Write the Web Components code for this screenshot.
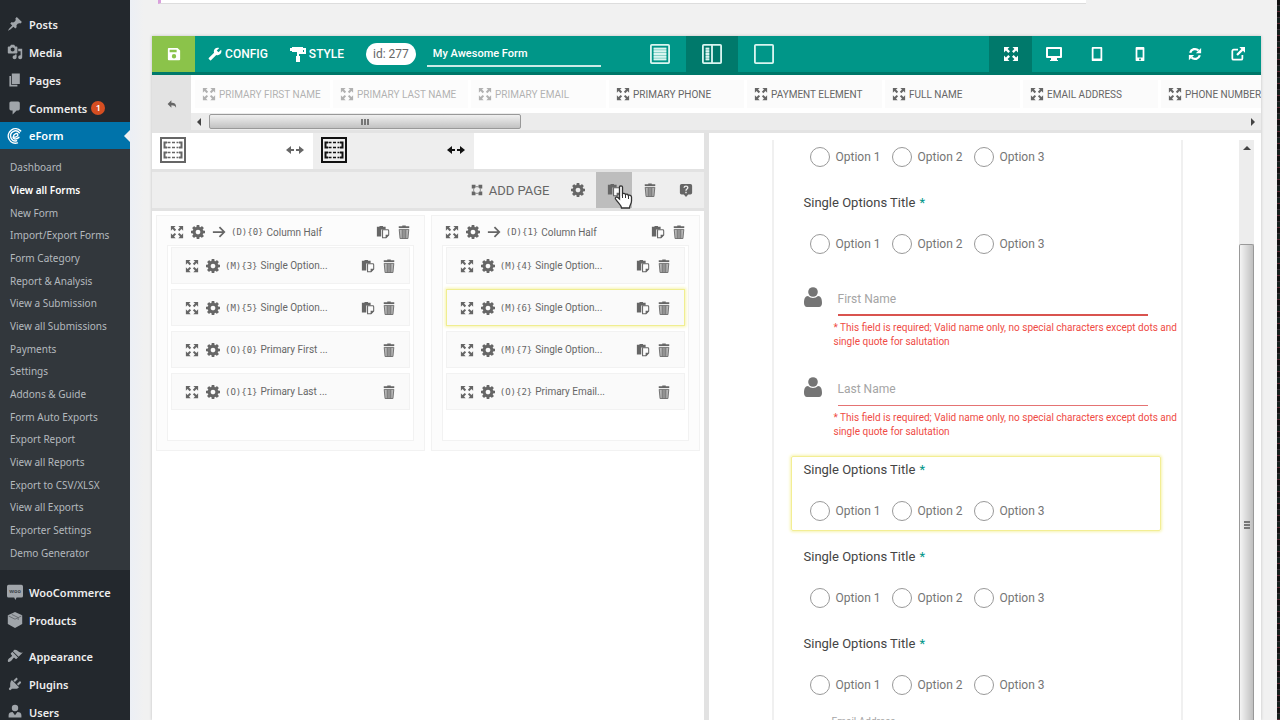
<!DOCTYPE html>
<html lang="en">
<head>
<meta charset="utf-8">
<meta name="viewport" content="width=device-width, initial-scale=1">
<title>eForm - My Awesome Form</title>
<style>
  html, body {
    height: 100%;
    margin: 0;
  }
  body {
    background: #f1f1f1;
    color: #666;
    font-family: Roboto, "Liberation Sans", sans-serif;
    font-size: 12px;
    overflow: hidden;
  }
</style>
</head>
<body>
<eform-app></eform-app>

<script>
const ICONS = {
  // admin menu
  pin: ['0 0 20 20', '<path d="M10.44 3.02l1.82-1.82 6.36 6.35-1.83 1.82c-1.05-.68-2.48-.57-3.41.36l-.75.75c-.92.93-1.04 2.35-.35 3.41l-1.83 1.82-2.41-2.41-2.8 2.79c-.42.42-3.38 2.71-3.8 2.29s1.86-3.39 2.28-3.81l2.79-2.79L4.1 9.36l1.83-1.82c1.05.69 2.48.57 3.4-.36l.75-.75c.93-.92 1.05-2.35.36-3.41z"/>'],
  media: ['0 0 20 20', '<path fill-rule="evenodd" d="M13 11V4c0-.55-.45-1-1-1h-1.67L9 1H5L3.67 3H2c-.55 0-1 .45-1 1v7c0 .55.45 1 1 1h10c.55 0 1-.45 1-1zM7 4.5c1.38 0 2.5 1.12 2.5 2.5S8.38 9.5 7 9.5 4.5 8.38 4.5 7 5.62 4.5 7 4.5zM14 6h5v10.5c0 1.38-1.12 2.5-2.5 2.5S14 17.88 14 16.5s1.12-2.5 2.5-2.5c.17 0 .34.02.5.05V9h-3V6zm-4 8.05V13h2v3.5c0 1.38-1.12 2.5-2.5 2.5S7 17.88 7 16.5 8.12 14 9.5 14c.17 0 .34.02.5.05z"/>'],
  page: ['0 0 20 20', '<path d="M6 15V2h10v13H6zm-1 1h8v2H3V5h2v11z"/>'],
  comment: ['0 0 20 20', '<path d="M5 2h9c1.1 0 2 .9 2 2v7c0 1.1-.9 2-2 2h-2l-5 5v-5H5c-1.1 0-2-.9-2-2V4c0-1.1.9-2 2-2z"/>'],
  eform: ['0 0 20 20', '<g fill="none" stroke="currentColor" stroke-width="1.8" stroke-linecap="round"><path d="M17 3.6A9 9 0 1 0 13 18.6"/><path d="M15.5 6A6.2 6.2 0 1 0 12 16"/><path d="M7.5 11.6c4 .2 6.600-1.600 6-3.700-.8-2.200-5.600-.3-5.600 3.200 0 3.400 4.300 3.200 7 .6"/></g>'],
  woo: ['0 0 20 20', '<path d="M2 1h16a2 2 0 0 1 2 2v12a2 2 0 0 1-2 2h-6l-1.500 3L9 17H2a2 2 0 0 1-2-2V3a2 2 0 0 1 2-2z"/><text x="10" y="11" text-anchor="middle" font-family="Open Sans, sans-serif" font-size="7" font-weight="700" fill="#444a50">woo</text>'],
  box: ['0 0 20 20', '<path d="M10 0l9 4v11l-9 5-9-5V4z"/><path d="M2 5l8 4 8-4M6 3l8 4v3" fill="none" stroke="#5a6065" stroke-width="1"/>'],
  brush: ['0 0 20 20', '<path d="M14.480 11.060L7.410 3.990l1.500-1.500c.5-.56 2.300-.47 3.510.32 1.210.8 1.430 1.280 2.910 2.100 1.180.64 2.450 1.260 4.450.85zm-.71.71L6.700 4.700 4.930 6.470c-.39.39-.39 1.020 0 1.410l1.060 1.060c.39.39.39 1.030 0 1.420-.6.6-1.430 1.110-2.210 1.690-.35.26-.7.53-1.010.84C1.430 14.230.4 16.080 1.400 17.070c.99 1 2.840-.03 4.180-1.360.31-.31.58-.66.85-1.020.57-.78 1.080-1.610 1.690-2.210.39-.39 1.020-.39 1.410 0l1.060 1.060c.39.39 1.020.39 1.410 0z"/>'],
  plug: ['0 0 20 20', '<path d="M13.110 4.360L9.870 7.600 8 5.730l3.240-3.240c.35-.34 1.050-.2 1.560.32.52.51.66 1.210.31 1.550zm-8 1.770l.91-1.120 9.010 9.010-1.190.84c-.71.71-2.630 1.160-3.820 1.160H6.140L4.900 17.260c-.59.59-1.540.59-2.120 0-.59-.58-.59-1.530 0-2.120l1.240-1.240v-3.880c0-1.130.4-3.190 1.090-3.890zm7.260 3.970l3.240-3.240c.34-.35 1.040-.21 1.550.31.52.51.66 1.210.31 1.550l-3.240 3.250z"/>'],
  users: ['0 0 20 20', '<circle cx="10" cy="5" r="4"/><path d="M2 17v-3c0-2.500 2-4 5-4l3 4 3-4c3 0 5 1.500 5 4v3z"/>'],
  // form builder
  save: ['0 0 16 16', '<path fill-rule="evenodd" d="M2 1h10l3 3v10a1 1 0 0 1-1 1H2a1 1 0 0 1-1-1V2a1 1 0 0 1 1-1zm1 2v3h8V3zm5 5a2.500 2.500 0 1 0 0 5 2.500 2.500 0 0 0 0-5z"/>'],
  wrench: ['0 0 24 24', '<path transform="matrix(-1 0 0 1 24 0)" d="M22.700 19l-9.100-9.100c.9-2.300.4-5-1.500-6.900-2-2-5-2.400-7.400-1.300L9 6 6 9 1.600 4.700C.4 7.100.9 10.100 2.900 12.100c1.900 1.900 4.600 2.400 6.900 1.500l9.100 9.100c.4.4 1 .4 1.400 0l2.300-2.300c.5-.4.5-1.100.1-1.400z"/>'],
  roller: ['0 0 16 16', '<path d="M2 1h11v1h3v6H9v2h1v6H6v-6h1V6h7V4h-1v2H2V5H0V2h2z"/>'],
  full: ['0 0 22 22', '<rect x="1" y="1" width="20" height="20" rx="1" fill="none" stroke="currentColor" stroke-width="2"/><path fill-opacity=".5" d="M4 4h14v14H4z"/><path d="M4 4h14v2H4zm0 3h14v2H4zm0 3h14v2H4zm0 3h14v2H4zm0 3h14v2H4z"/>'],
  split: ['0 0 22 22', '<rect x="1" y="1" width="20" height="20" rx="1" fill="none" stroke="currentColor" stroke-width="2"/><path fill-opacity=".5" d="M4 4h4v14H4z"/><path d="M10 1h2v20h-2zM4 4h4v2H4zm0 3h4v2H4zm0 3h4v2H4zm0 3h4v2H4zm0 3h4v2H4z"/>'],
  blank: ['0 0 22 22', '<rect x="1" y="1" width="20" height="20" rx="1" fill="none" stroke="currentColor" stroke-width="2"/>'],
  expand: ['0 0 16 16', '<path d="M1 1h5.500L4.600 2.900 7 5.300 5.300 7 2.900 4.600 1 6.500zM15 1v5.500l-1.900-1.900L10.700 7 9 5.300l2.400-2.400L9.500 1zM1 15V9.500l1.900 1.900L5.300 9 7 10.700l-2.400 2.400L6.500 15zM15 15H9.500l1.900-1.900L9 10.700 10.700 9l2.400 2.400L15 9.500z"/>'],
  desktop: ['0 0 16 16', '<path fill-rule="evenodd" d="M1 1h14a1 1 0 0 1 1 1v9a1 1 0 0 1-1 1h-4v2h1v1H4v-1h1v-2H1a1 1 0 0 1-1-1V2a1 1 0 0 1 1-1zm1 2v7h12V3z"/>'],
  tablet: ['0 0 16 16', '<path fill-rule="evenodd" d="M3 0h10a1 1 0 0 1 1 1v14a1 1 0 0 1-1 1H3a1 1 0 0 1-1-1V1a1 1 0 0 1 1-1zm1 2v11h8V2z"/>'],
  phone: ['0 0 16 16', '<path fill-rule="evenodd" d="M4 0h8a1 1 0 0 1 1 1v14a1 1 0 0 1-1 1H4a1 1 0 0 1-1-1V1a1 1 0 0 1 1-1zm1 3v9h6V3zm2 10v2h2v-2z"/>'],
  refresh: ['0 0 16 16', '<path d="M2.500 6.500A5.700 5.700 0 0 1 12 4M13.500 9.500A5.700 5.700 0 0 1 4 12" fill="none" stroke="currentColor" stroke-width="2.600"/><path d="M15 1v6H9zM1 15V9h6z"/>'],
  external: ['0 0 16 16', '<path d="M8 3H3a1.500 1.500 0 0 0-1.500 1.500V13A1.500 1.500 0 0 0 3 14.500h8.500A1.500 1.500 0 0 0 13 13V9" fill="none" stroke="currentColor" stroke-width="2"/><path d="M9.500 0H16v6.500l-2.300-2.300L7.800 10 6 8.200l5.800-5.900z"/>'],
  undo: ['0 0 16 16', '<path d="M7 2v4c5 0 8 2 7.500 8C13 11 11 10 7 10v4L1 8z"/>'],
  layout: ['0 0 26 26', '<path d="M1 1h24v24H1z" fill="none" stroke="currentColor" stroke-width="2"/><g fill="none" stroke="currentColor" stroke-width="1.600"><path stroke-width="2" d="M7 5.500H4.500v5H7M19 5.500h2.500v5H19M7 15.500H4.500v5H7M19 15.500h2.500v5H19"/><path stroke-dasharray="3 1.500" d="M7.500 5.500h11M7.500 10.500h11M7.500 15.500h11M7.500 20.500h11"/></g>'],
  resize: ['0 0 18 10', '<path d="M0 5l5-4v3h3v2H5v3zM18 5l-5-4v3h-3v2h3v3z"/>'],
  addpage: ['0 0 16 16', '<path d="M1 1h5v4H5v1H1zM10 1h5v5h-4V5h-1zM1 10h4v1h1v4H1zM11 10h4v5h-5v-4h1z"/><path d="M6 3.500h4M6 12.500h4M3.500 6v4M12.500 6v4" fill="none" stroke="currentColor" stroke-width="1.500" stroke-opacity=".6"/>'],
  gear: ['128 128 1536 1536', '<path d="M1152 896q0-106-75-181t-181-75-181 75-75 181 75 181 181 75 181-75 75-181zm512-109v222q0 12-8 23t-20 13l-185 28q-19 54-39 91 35 50 107 138 10 12 10 25t-9 23q-27 37-99 108t-94 71q-12 0-26-9l-138-108q-44 23-91 38-16 136-29 186-7 28-36 28h-222q-14 0-24.500-8.500t-11.500-21.500l-28-184q-49-16-90-37l-141 107q-10 9-25 9-14 0-25-11-126-114-165-168-7-10-7-23 0-12 8-23 15-21 51-66.500t54-70.500q-27-50-41-99l-183-27q-13-2-21-12.500t-8-23.500v-222q0-12 8-23t19-13l186-28q14-46 39-92-40-57-107-138-10-12-10-24 0-10 9-23 26-36 98.500-107.500t94.500-71.500q13 0 26 10l138 107q44-23 91-38 16-136 29-186 7-28 36-28h222q14 0 24.500 8.500t11.500 21.500l28 184q49 16 90 37l142-107q9-9 24-9 13 0 25 10 129 119 165 170 7 8 7 22 0 12-8 23-15 21-51 66.500t-54 70.500q26 50 41 98l183 28q13 2 21 12.500t8 23.500z"/>'],
  copy: ['0 0 16 16', '<path d="M1 2h3V1h4v1h3v3H6v8H1z"/><path d="M7.500 5.500h6a1 1 0 0 1 1 1v5l-3 3h-4z" fill="#fcfcfc" stroke="currentColor" stroke-width="1.200"/><path d="M11 15v-4h4z"/>'],
  trash: ['0 0 16 16', '<path d="M6 1.500V.5h4v1h4v2H2v-2z"/><path d="M2.500 5h11l-1 10.500h-9z" fill-opacity=".45"/><path d="M2.500 5h11l-1 10.500h-9zM6 5.500v10M8 5.500v10M10 5.500v10" fill="none" stroke="currentColor"/>'],
  help: ['0 0 16 16', '<path d="M3 1h10a2 2 0 0 1 2 2v8a2 2 0 0 1-2 2h-2.500L8 16l-2.500-3H3a2 2 0 0 1-2-2V3a2 2 0 0 1 2-2z"/><path d="M5.800 5.500C6 2.800 10.200 3 10 5.400 9.900 7 8 6.800 8 8.800M8 10v1.600" fill="none" stroke="#eee" stroke-width="1.600"/>'],
  arrow: ['0 0 16 16', '<path d="M1 8h13M8.500 2.500L14 8l-5.500 5.500" fill="none" stroke="currentColor" stroke-width="2"/>'],
  person: ['0 0 18 20', '<circle cx="9" cy="5" r="4.800"/><path d="M4 9a7 7 0 0 0 10 0c3 0 4 3 4 7 0 2-1 4-3 4H3c-2 0-3-2-3-4 0-4 1-7 4-7z"/>'],
  hand: ['0 0 20 24', '<path d="M6 2c0-1.500 3-1.500 3 0v7c.6-1 2.600-.8 3 .6.8-.8 2.500-.4 2.800.8 1-.8 3.200 0 3.200 1.600V16c0 3-2 4-2 7H8c0-3-3-4.500-6-9-.8-1.500 1-2.800 2.400-1.400L6 14z" fill="#fff" stroke="#333" stroke-width="1.300"/><path d="M9 9v4M12 10v3M15 11v3" stroke="#333"/>']
};

// Registers an element whose shadow root is filled from render().
function define(name, css, render) {
  customElements.define(name, class extends HTMLElement {
    connectedCallback() {
      if (this.shadowRoot) return;
      this.attachShadow({ mode: 'open' });
      this.shadowRoot.innerHTML = `<style>${css}</style>${render(this)}`;
    }
  });
}

const attr = (el, key) => el.getAttribute(key) || '';

define('ef-icon', `
  :host {
    display: inline-block;
    flex: none;
    width: 14px;
    height: 14px;
  }
  svg {
    display: block;
    width: 100%;
    height: 100%;
    fill: currentColor;
  }
`, el => {
  const [box, body] = ICONS[attr(el, 'name')];
  return `<svg viewBox="${box}" aria-hidden="true">${body}</svg>`;
});

/* ---------- Admin menu ---------- */

define('admin-item', `
  :host { display: block; }
  a {
    display: flex;
    align-items: center;
    gap: 6px;
    height: 28px;
    padding-left: 7px;
    color: #eee;
    font: 600 11px "Noto Sans", "Open Sans", sans-serif;
    text-decoration: none;
  }
  ef-icon {
    width: 16px;
    height: 16px;
    color: #a0a5aa;
  }
  :host([current]) a {
    position: relative;
    height: 27px;
    background: #0073aa;
    color: #fff;
  }
  :host([current]) ef-icon { color: #fff; }
  :host([current]) a::after {
    content: "";
    position: absolute;
    right: 0;
    border: 6px solid transparent;
    border-left-width: 0;
    border-right-color: #f1f1f1;
  }
`, el => `
  <a href="#"><ef-icon name="${attr(el, 'icon')}"></ef-icon><slot></slot></a>
`);

define('admin-menu', `
  :host {
    display: block;
    width: 130px;
    flex: none;
    padding-top: 10px;
    box-sizing: border-box;
    background: #23282d;
    overflow: hidden;
  }
  .badge {
    width: 14px;
    border-radius: 7px;
    background: #d54e21;
    color: #fff;
    font-size: 9px;
    line-height: 14px;
    text-align: center;
    margin-left: -2px;
  }
  ul {
    display: grid;
    grid-auto-rows: 1fr;
    height: 408px;
    margin: 0 0 8px;
    padding: 7px 0 6px 10px;
    list-style: none;
    background: #32373c;
  }
  li {
    display: flex;
    align-items: center;
  }
  li a {
    color: #b4b9be;
    font: 10px "Noto Sans", "Open Sans", sans-serif;
    text-decoration: none;
  }
  li a[aria-current] {
    color: #fff;
    font-weight: 600;
  }
  .gap { height: 8px; }
`, () => {
  const pages = ['Dashboard', 'View all Forms', 'New Form', 'Import/Export Forms', 'Form Category',
    'Report &amp; Analysis', 'View a Submission', 'View all Submissions', 'Payments', 'Settings',
    'Addons &amp; Guide', 'Form Auto Exports', 'Export Report', 'View all Reports',
    'Export to CSV/XLSX', 'View all Exports', 'Exporter Settings', 'Demo Generator'];
  return `
    <nav aria-label="Admin">
      <admin-item icon="pin">Posts</admin-item>
      <admin-item icon="media">Media</admin-item>
      <admin-item icon="page">Pages</admin-item>
      <admin-item icon="comment">Comments <span class="badge">1</span></admin-item>
      <admin-item icon="eform" current>eForm</admin-item>
      <ul>${pages.map(p => `<li><a href="#"${p === 'View all Forms' ? ' aria-current="page"' : ''}>${p}</a></li>`).join('')}</ul>
      <admin-item icon="woo">WooCommerce</admin-item>
      <admin-item icon="box">Products</admin-item>
      <div class="gap"></div>
      <admin-item icon="brush">Appearance</admin-item>
      <admin-item icon="plug">Plugins</admin-item>
      <admin-item icon="users">Users</admin-item>
    </nav>`;
});

/* ---------- Top toolbar ---------- */

define('ef-toolbar', `
  :host {
    display: flex;
    height: 36px;
    padding-right: 2px;
    border-bottom: 3px solid #00796b;
    background: #009688;
    color: #fff;
  }
  button {
    display: flex;
    align-items: center;
    justify-content: center;
    gap: 3px;
    width: 43px;
    padding: 0;
    border: 0;
    background: none;
    color: inherit;
    font: 500 12px Roboto, sans-serif;
  }
  .save { background: #8bc34a; margin-right: 6px; }
  .text { width: 74px; }
  .style { width: 84px; }
  .pill {
    align-self: center;
    margin: 0 11px 0 7px;
    padding: 0 7px;
    border-radius: 11px;
    background: #fff;
    color: #666;
    font-size: 12px;
    line-height: 22px;
  }
  input {
    align-self: center;
    box-sizing: border-box;
    width: 174px;
    height: 26px;
    padding: 0 6px;
    border: 0;
    border-bottom: 2px solid #cdeae7;
    background: none;
    color: #fff;
    font: 500 11px Roboto, sans-serif;
  }
  .views {
    display: flex;
    margin-left: 33px;
  }
  .views button { width: 52px; }
  .views ef-icon { width: 22px; height: 20px; color: #d9f5f0; }
  .active { background: #00796b; }
  .devices { display: flex; margin-left: auto; }
  .actions { display: flex; margin-left: 12px; }
  .big { width: 16px; height: 16px; }
`, () => `
  <button class="save" aria-label="Save"><ef-icon name="save"></ef-icon></button>
  <button class="text"><ef-icon name="wrench"></ef-icon>CONFIG</button>
  <button class="style"><ef-icon class="big" name="roller"></ef-icon>STYLE</button>
  <span class="pill">id: 277</span>
  <input type="text" value="My Awesome Form" aria-label="Form name">
  <div class="views">
    <button aria-label="Builder only"><ef-icon name="full"></ef-icon></button>
    <button class="active" aria-label="Split view"><ef-icon name="split"></ef-icon></button>
    <button aria-label="Preview only"><ef-icon name="blank"></ef-icon></button>
  </div>
  <div class="devices">
    <button class="active" aria-label="Fit"><ef-icon class="big" name="expand"></ef-icon></button>
    <button aria-label="Desktop"><ef-icon class="big" name="desktop"></ef-icon></button>
    <button aria-label="Tablet"><ef-icon name="tablet"></ef-icon></button>
    <button aria-label="Phone"><ef-icon name="phone"></ef-icon></button>
  </div>
  <div class="actions">
    <button aria-label="Refresh"><ef-icon name="refresh"></ef-icon></button>
    <button aria-label="Open in new window"><ef-icon name="external"></ef-icon></button>
  </div>
`);

/* ---------- Element palette ---------- */

define('ef-palette', `
  :host {
    display: flex;
    background: #fff;
  }
  .undo {
    flex: none;
    width: 39px;
    padding: 0;
    border: 0;
    background: #e3e3e3;
    color: #666;
  }
  .undo ef-icon { width: 10px; height: 10px; }
  .body { flex: 1; min-width: 0; }
  ul {
    display: flex;
    gap: 3px;
    margin: 0;
    padding: 5px 0 5px 4px;
    list-style: none;
    overflow: hidden;
  }
  li {
    display: flex;
    align-items: center;
    gap: 3px;
    flex: none;
    box-sizing: border-box;
    width: 135px;
    height: 28px;
    padding-left: 7px;
    background: #fbfbfb;
    font-size: 10px;
    white-space: nowrap;
  }
  li.used { opacity: .5; }
  .track {
    display: flex;
    align-items: center;
    height: 17px;
    padding: 0 6px;
    border-bottom: 3px solid #e3e3e3;
    background: #ececec;
  }
  .arrow {
    width: 0;
    border: 4px solid transparent;
  }
  .left { border-left-width: 0; border-right-color: #444; }
  .right { border-right-width: 0; border-left-color: #444; margin-left: auto; }
  .thumb {
    display: flex;
    justify-content: center;
    align-items: center;
    gap: 1px;
    box-sizing: border-box;
    width: calc(30% - 5px);
    height: 15px;
    margin-left: 8px;
    border: 1px solid #999;
    border-radius: 2px;
    background: linear-gradient(#f0f0f0, #c2c2c2);
  }
  .thumb i { width: 2px; height: 6px; background: #777; }
`, () => {
  const items = ['PRIMARY FIRST NAME', 'PRIMARY LAST NAME', 'PRIMARY EMAIL', 'PRIMARY PHONE',
    'PAYMENT ELEMENT', 'FULL NAME', 'EMAIL ADDRESS', 'PHONE NUMBER'];
  return `
    <button class="undo" aria-label="Undo"><ef-icon name="undo"></ef-icon></button>
    <div class="body">
      <ul>${items.map((t, i) => `<li class="${i < 3 ? 'used' : ''}"><ef-icon name="expand"></ef-icon>${t}</li>`).join('')}</ul>
      <div class="track">
        <span class="arrow left"></span>
        <span class="thumb"><i></i><i></i><i></i></span>
        <span class="arrow right"></span>
      </div>
    </div>`;
});

/* ---------- Builder ---------- */

define('ef-row', `
  :host {
    display: flex;
    align-items: center;
    box-sizing: border-box;
    height: 37px;
    padding: 0 13px;
    border: 1px solid #f2f2f2;
    background: #fafafa;
    font-size: 10px;
  }
  :host([selected]) {
    border-color: #f0ee90;
    box-shadow: 0 0 3px 1px #f6f3b0;
  }
  :host([head]) {
    height: 26px;
    padding: 0 3px;
    border: 0;
    background: none;
  }
  button {
    display: flex;
    padding: 0;
    border: 0;
    background: none;
    color: #666;
  }
  .tools { display: flex; align-items: center; gap: 7px; }
  code {
    margin: 0 3px 0 5px;
    font: 9px "DejaVu Sans Mono", monospace;
  }
  .end { margin-left: auto; }
`, el => {
  const btn = (icon, label) => `<button aria-label="${label}"><ef-icon name="${icon}"></ef-icon></button>`;
  return `
    <div class="tools">
      ${btn('expand', 'Move')}${btn('gear', 'Settings')}${el.hasAttribute('head') ? btn('arrow', 'Toggle') : ''}
    </div>
    <code>${attr(el, 'code')}</code><slot></slot>
    <div class="tools end">
      ${el.hasAttribute('nocopy') ? '' : btn('copy', 'Duplicate')}${btn('trash', 'Delete')}
    </div>`;
});

define('ef-column', `
  :host {
    display: block;
    flex: 1;
    padding: 3px 10px 9px;
    border: 1px solid #f2f2f2;
    background: #fcfcfc;
  }
  .drop {
    display: flex;
    flex-direction: column;
    gap: 5px;
    padding: 1px 3px 30px;
    border: 1px solid #f2f2f2;
    background: #fff;
  }
`, el => `
  <ef-row head code="${attr(el, 'code')}">Column Half</ef-row>
  <div class="drop"><slot></slot></div>
`);

define('ef-builder', `
  :host {
    display: block;
    background: #fff;
  }
  button {
    display: flex;
    align-items: center;
    padding: 0;
    border: 0;
    background: none;
    color: #666;
    font: 13px Roboto, sans-serif;
  }
  .tabs { display: flex; }
  .tabs button {
    width: 161px;
    height: 36px;
    padding: 0 9px 2px 8px;
    justify-content: space-between;
  }
  .tabs ef-icon { width: 26px; height: 26px; }
  .tabs .resize { width: 18px; height: 10px; }
  .tabs .inactive { background: #eee; color: #111; }
  .bar {
    display: flex;
    justify-content: flex-end;
    height: 36px;
    border: solid #e2e2e2;
    border-width: 3px 0;
    background: #eee;
  }
  .bar button { width: 36px; justify-content: center; }
  .bar .add { width: auto; gap: 6px; margin-right: 10px; font-size: 13px; }
  .add ef-icon { width: 12px; height: 12px; }
  .bar .hover { position: relative; background: #bdbdbd; }
  .hand {
    position: absolute;
    left: 17px;
    top: 13px;
    width: 21px;
    height: 24px;
    z-index: 1;
  }
  .columns {
    display: flex;
    align-items: flex-start;
    gap: 6px;
    padding: 4px;
  }
`, () => `
  <div class="tabs">
    <button aria-label="Page 1"><ef-icon name="layout"></ef-icon><ef-icon class="resize" name="resize"></ef-icon></button>
    <button class="inactive" aria-label="Page 2"><ef-icon name="layout"></ef-icon><ef-icon class="resize" name="resize"></ef-icon></button>
  </div>
  <div class="bar">
    <button class="add"><ef-icon name="addpage"></ef-icon>ADD PAGE</button>
    <button aria-label="Page settings"><ef-icon name="gear"></ef-icon></button>
    <button class="hover" aria-label="Duplicate page"><ef-icon name="copy"></ef-icon><ef-icon class="hand" name="hand"></ef-icon></button>
    <button aria-label="Delete page"><ef-icon name="trash"></ef-icon></button>
    <button aria-label="Help"><ef-icon name="help"></ef-icon></button>
  </div>
  <div class="columns">
    <ef-column code="(D){0}">
      <ef-row code="(M){3}">Single Option...</ef-row>
      <ef-row code="(M){5}">Single Option...</ef-row>
      <ef-row code="(O){0}" nocopy>Primary First ...</ef-row>
      <ef-row code="(O){1}" nocopy>Primary Last ...</ef-row>
    </ef-column>
    <ef-column code="(D){1}">
      <ef-row code="(M){4}">Single Option...</ef-row>
      <ef-row code="(M){6}" selected>Single Option...</ef-row>
      <ef-row code="(M){7}">Single Option...</ef-row>
      <ef-row code="(O){2}" nocopy>Primary Email...</ef-row>
    </ef-column>
  </div>
`);

/* ---------- Preview ---------- */

define('ef-choice', `
  :host { display: block; }
  fieldset {
    margin: 0;
    padding: 3px 12px 8px;
    border: 1px solid transparent;
    border-radius: 2px;
  }
  :host([selected]) fieldset {
    border-color: #f3ee94;
    box-shadow: 0 0 3px 1px #f6f3b0;
  }
  legend {
    float: left;
    width: 100%;
    padding: 0;
    margin-bottom: 20px;
    color: #444;
    font-size: 13px;
    line-height: 20px;
  }
  legend span { color: #009688; margin-left: 1px; }
  .options {
    display: flex;
    clear: both;
    padding-left: 6px;
  }
  label {
    display: flex;
    align-items: center;
    gap: 6px;
    width: 82px;
    height: 22px;
    color: #757575;
    font-size: 12px;
  }
  input {
    appearance: none;
    flex: none;
    width: 20px;
    height: 20px;
    margin: 0;
    border: 1px solid #999;
    border-radius: 50%;
    background: #fff;
  }
`, el => `
  <fieldset>
    ${el.hasAttribute('untitled') ? '' : '<legend>Single Options Title <span>*</span></legend>'}
    <div class="options">
      ${[1, 2, 3].map(n => `<label><input type="radio" name="choice">Option ${n}</label>`).join('')}
    </div>
  </fieldset>
`);

define('ef-name-field', `
  :host {
    display: flex;
    gap: 12px;
    padding: 9px 0 5px 13px;
  }
  ef-icon {
    width: 18px;
    height: 20px;
    margin-top: 2px;
    color: #757575;
  }
  .field { position: relative; flex: 1; }
  label {
    position: absolute;
    left: 4px;
    top: 4px;
    color: #a5a5a5;
    font-size: 12px;
    line-height: 20px;
  }
  input {
    display: block;
    box-sizing: border-box;
    width: calc(100% - 17px);
    height: 31px;
    margin-left: 4px;
    padding: 0;
    border: 0;
    border-bottom: 1px solid #e57373;
    background: none;
    outline: 0;
  }
  :host([invalid]) input { border-bottom: 2px solid #d9534f; }
  /* the message may run a little past the input */
  p {
    margin: 5px -20px 0 0;
    color: #ef4b45;
    font-size: 10px;
    line-height: 14px;
  }
`, el => `
  <ef-icon name="person"></ef-icon>
  <div class="field">
    <label for="name">${attr(el, 'label')}</label>
    <input type="text" id="name">
    <p>* This field is required; Valid name only, no special characters except dots and single quote for salutation</p>
  </div>
`);

define('ef-preview', `
  :host {
    display: flex;
    padding: 7px 7px 0 63px;
    background: #fff;
    overflow: hidden;
  }
  .card {
    flex: 1;
    height: 100%;
    padding: 0 20px 0 17px;
    border: solid #f0f0f0;
    border-width: 0 2px;
    overflow: hidden;
    box-sizing: border-box;
  }
  .form {
    display: flex;
    flex-direction: column;
    gap: 12px;
    padding-top: 2px;
  }
  .email {
    padding-left: 41px;
    color: #a5a5a5;
    font-size: 10px;
    line-height: 10px;
  }
  .track {
    display: flex;
    flex-direction: column;
    align-items: center;
    width: 15px;
    margin-left: 56px;
    background: #ededed;
  }
  .up {
    height: 0;
    margin: 2px 0 94px;
    border: 4px solid transparent;
    border-bottom-color: #444;
  }
  .thumb {
    display: flex;
    flex-direction: column;
    align-items: center;
    justify-content: center;
    gap: 1px;
    flex: 1;
    box-sizing: border-box;
    width: 100%;
    padding-top: 84px;
    border: 1px solid #999;
    border-bottom: 0;
    border-radius: 2px 2px 0 0;
    background: linear-gradient(90deg, #f4f4f4, #c0c0c0);
  }
  .thumb i { width: 6px; height: 2px; background: #777; }
`, () => `
  <div class="card">
    <div class="form">
      <ef-choice untitled></ef-choice>
      <ef-choice></ef-choice>
      <ef-name-field label="First Name" invalid></ef-name-field>
      <ef-name-field label="Last Name"></ef-name-field>
      <ef-choice selected></ef-choice>
      <ef-choice></ef-choice>
      <ef-choice></ef-choice>
      <div class="email">Email Address</div>
    </div>
  </div>
  <div class="track">
    <span class="up"></span>
    <span class="thumb"><i></i><i></i><i></i></span>
  </div>
`);

/* ---------- Page ---------- */

define('eform-app', `
  :host {
    display: flex;
    height: 100vh;
  }
  main {
    display: flex;
    flex-direction: column;
    flex: 1;
    min-width: 0;
    padding: 0 16px 0 22px;
    background: linear-gradient(90deg, #eceff5, #f1f1f1 14px);
  }
  .notice {
    height: 3px;
    margin: 0 175px 32px 6px;
    border-left: 3px solid #d9a0dc;
    border-bottom: 1px solid #ddd;
    background: #fff;
  }
  .workspace {
    display: flex;
    flex-direction: column;
    flex: 1;
    min-height: 0;
    box-shadow: 0 0 3px rgba(0, 0, 0, .2);
  }
  .panes {
    display: grid;
    grid-template-columns: calc(50% - 3px) 1fr;
    gap: 5px;
    flex: 1;
    min-height: 0;
    background: #e2e2e2;
  }
  .panes > * { min-width: 0; min-height: 0; }
  .edge {
    width: 3px;
    background: repeating-linear-gradient(#111 0 5px, #3c3238 5px 6px, #16201e 6px 11px, #5b2a35 11px 12px);
  }
`, () => `
  <admin-menu></admin-menu>
  <main>
    <div class="notice"></div>
    <div class="workspace">
      <ef-toolbar></ef-toolbar>
      <ef-palette></ef-palette>
      <div class="panes">
        <ef-builder></ef-builder>
        <ef-preview></ef-preview>
      </div>
    </div>
  </main>
  <div class="edge"></div>
`);
</script>
</body>
</html>
